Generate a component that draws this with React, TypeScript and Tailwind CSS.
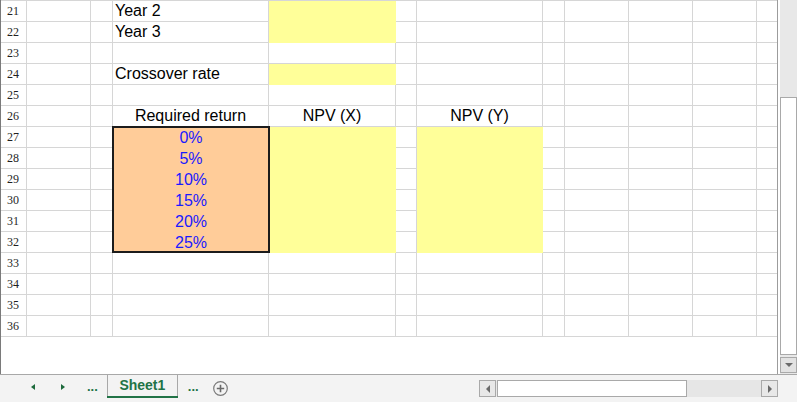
import clsx from 'clsx';

// Visible rows of the sheet
const ROWS = Array.from({ length: 16 }, (_, i) => 21 + i);
// Column letters after the row header; C holds the labels, D and F the answers
const COLS = ['A', 'B', 'C', 'D', 'E', 'F', 'G', 'H', 'I', 'J', 'K'];

const YELLOW = new Set(['D21', 'D22', 'D24', 'D27', 'D28', 'D29', 'D30', 'D31', 'D32', 'F27', 'F28', 'F29', 'F30', 'F31', 'F32']);

const TEXT: Record<string, { t: string; center?: boolean }> = {
  C21: { t: 'Year 2' },
  C22: { t: 'Year 3' },
  C24: { t: 'Crossover rate' },
  C26: { t: 'Required return', center: true },
  D26: { t: 'NPV (X)', center: true },
  F26: { t: 'NPV (Y)', center: true },
};

const RATES = ['0%', '5%', '10%', '15%', '20%', '25%'];

function Cell({ col, row }: { col: string; row: number }) {
  const key = `${col}${row}`;
  const yellow = YELLOW.has(key);
  const text = TEXT[key];
  return (
    <div
      className={clsx(
        'border-b overflow-visible whitespace-nowrap text-[16px] leading-[20px] text-black',
        col !== 'K' && 'border-r',
        yellow ? 'bg-[#ffff99] border-[#ffff99]' : 'border-[#d6d6d6]',
        text?.center ? 'text-center' : 'pl-[2px]'
      )}
    >
      {text?.t}
    </div>
  );
}

function Sheet() {
  return (
    <div className="flex-1 h-full bg-white border-l border-l-[#7a7a7a] border-r border-r-[#9c9c9c]">
      <div
        className="grid grid-cols-[26px_64px_22px_156px_127px_21px_126px_22px_64px_64px_64px_20px] auto-rows-[21px] border-t border-[#d6d6d6] font-['Liberation_Sans',Arial,sans-serif]"
      >
        {/* Input block with the required returns */}
        <div className="col-start-4 row-start-7 row-span-6 -ml-px -mr-px -mt-px relative z-10 bg-[#ffcc99] border-2 border-[#1c1c1c]">
          <div className="-mt-px flex flex-col">
            {RATES.map((r) => (
              <div key={r} className="h-[21px] leading-[21px] text-center text-[16px] text-[#1a1aff]">
                {r}
              </div>
            ))}
          </div>
        </div>

        {ROWS.map((row) => [
          <div
            key={`h${row}`}
            className="border-r border-b border-[#d6d6d6] pl-[6px] leading-[20px] text-[12px] text-[#1f1f1f] font-['Liberation_Serif','Times_New_Roman',serif]"
          >
            {row}
          </div>,
          ...COLS.filter((c) => !(c === 'C' && row >= 27 && row <= 32)).map((c) => (
            <Cell key={`${c}${row}`} col={c} row={row} />
          )),
        ])}
      </div>
    </div>
  );
}

function VerticalScroll() {
  return (
    <div className="w-[19px] h-full pl-[2px] bg-white">
      <div className="h-full bg-[#e8e8e8] flex flex-col">
        <div className="h-[97px]" />
        <div className="h-[258px] bg-white border border-[#a9a9a9]" />
        <div className="h-[2px]" />
        <div className="h-[16px] border border-[#a9a9a9] bg-[#e2e2e2] flex items-center justify-center">
          <div className="w-0 h-0 border-x-[4px] border-x-transparent border-t-[4px] border-t-[#6a6a6a]" />
        </div>
      </div>
    </div>
  );
}

function TabBar() {
  return (
    <div className="h-[28px] border-t border-[#a8a8a8] bg-[#f3f3f3] flex font-['Liberation_Sans',Arial,sans-serif]">
      <div className="ml-[31px] mt-[9px] w-0 h-0 border-y-[3px] border-y-transparent border-r-[4px] border-r-[#1e6a3c]" />
      <div className="ml-[26px] mt-[9px] w-0 h-0 border-y-[3px] border-y-transparent border-l-[4px] border-l-[#1e6a3c]" />
      <div className="ml-[22px] mt-[2px] text-[13px] font-bold text-[#217346] leading-[20px]">...</div>

      {/* Active sheet tab */}
      <div className="ml-[9px] w-[71px] h-[23px] flex flex-col">
        <div className="flex-1 border-x border-[#a8a8a8] flex items-center justify-center text-[14px] font-bold text-[#217346]">
          Sheet1
        </div>
        <div className="h-[2px] bg-[#217346]" />
      </div>

      <div className="ml-[10px] mt-[2px] text-[13px] font-bold text-[#217346] leading-[20px]">...</div>
      <svg className="ml-[14px] mt-[6px]" width="15" height="15" viewBox="0 0 15 15" aria-hidden="true">
        <circle cx="7.5" cy="7.5" r="6.8" fill="none" stroke="#7a7a7a" strokeWidth="1.2" />
        <path d="M7.5 3.8v7.4M3.8 7.5h7.4" stroke="#6a6a6a" strokeWidth="1.6" />
      </svg>

      {/* Horizontal scroll */}
      <div className="ml-auto mr-[19px] mt-[5px] h-[17px] flex">
        <div className="w-[17px] border border-[#a9a9a9] bg-[#e8e8e8] flex items-center justify-center">
          <div className="w-0 h-0 border-y-[4px] border-y-transparent border-r-[4px] border-r-[#6a6a6a]" />
        </div>
        <div className="w-px bg-[#e8e8e8]" />
        <div className="w-[190px] bg-white border border-[#a9a9a9]" />
        <div className="w-[74px] bg-[#e6e6e6]" />
        <div className="w-[17px] border border-[#a9a9a9] bg-[#e8e8e8] flex items-center justify-center">
          <div className="w-0 h-0 border-y-[4px] border-y-transparent border-l-[4px] border-l-[#6a6a6a]" />
        </div>
      </div>
    </div>
  );
}

export default function App() {
  return (
    <div className="w-[797px] h-[402px] bg-white flex flex-col overflow-hidden">
      <div className="h-[374px] flex">
        <Sheet />
        <VerticalScroll />
      </div>
      <TabBar />
    </div>
  );
}
